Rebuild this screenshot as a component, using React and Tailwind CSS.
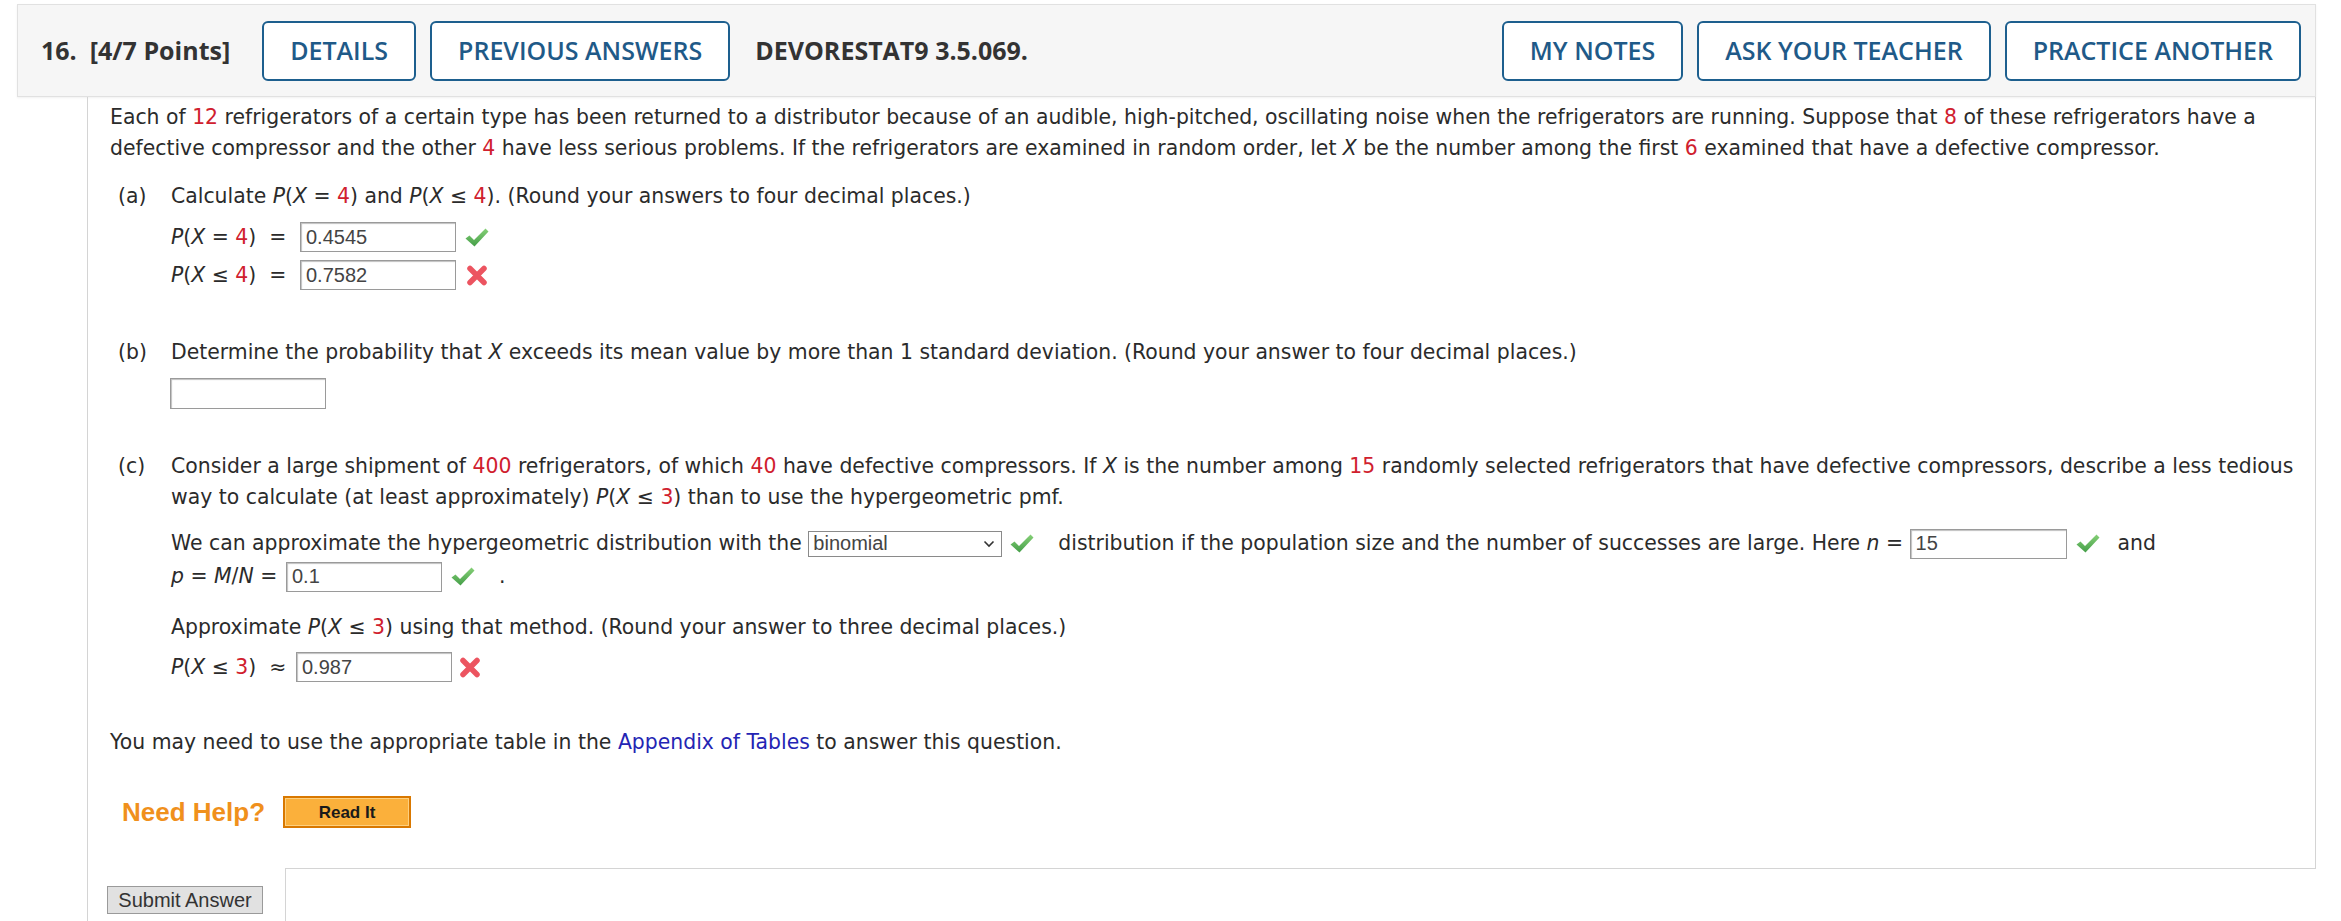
import React from "react";

const Red = ({ children }) => <span className="text-[#d0202e]">{children}</span>;
const M = ({ children }) => <i>{children}</i>;

function Check() {
  return (
    <svg width="24" height="19" viewBox="0 0 24 19" className="shrink-0">
      <defs>
        <linearGradient id="gck" x1="0" y1="0" x2="0" y2="1">
          <stop offset="0" stopColor="#86d077" />
          <stop offset="1" stopColor="#449e48" />
        </linearGradient>
      </defs>
      <path d="M0.5 10.5 L4.5 7.5 L9 12 L20.5 0.5 L23.5 3.5 L9.5 18.5 Z" fill="url(#gck)" />
    </svg>
  );
}

function Cross() {
  return (
    <svg width="22" height="21" viewBox="0 0 22 21" className="shrink-0">
      <path d="M4 3.5 L18 17.5 M18 3.5 L4 17.5" stroke="#ec5460" strokeWidth="5.5" strokeLinecap="round" />
    </svg>
  );
}

function Answer({ value, className = "" }) {
  return (
    <div
      className={`flex h-[30px] w-[156px] items-center border border-[#9a9a9a] bg-white pl-[5px] font-['Liberation_Sans',Arial,sans-serif] text-[20px] text-[#444] shadow-[inset_1px_1px_1px_rgba(0,0,0,0.25)] ${className}`}
    >
      {value}
    </div>
  );
}

function HeadButton({ children }) {
  return (
    <button className="h-[60px] rounded-[6px] border-2 border-[#1d5f8e] bg-white px-[26px] text-[25px] font-semibold text-[#1f5a88]">
      {children}
    </button>
  );
}

export default function App() {
  return (
    <div className="min-h-[921px] bg-white pl-[17px] pr-[25px] pt-[4px] text-[#2b2b2b]">
      <header className="flex h-[93px] items-center border border-[#e1e1e1] bg-[#f6f6f6] pl-[23px] pr-[14px] font-['Open_Sans',sans-serif] shadow-[0_1px_2px_rgba(0,0,0,0.06)]">
        <span className="text-[25px] font-bold text-[#333]">16.&nbsp; [4/7 Points]</span>
        <div className="ml-[32px] flex gap-[14px]">
          <HeadButton>DETAILS</HeadButton>
          <HeadButton>PREVIOUS ANSWERS</HeadButton>
        </div>
        <span className="ml-[25px] text-[25px] font-bold text-[#333]">DEVORESTAT9 3.5.069.</span>
        <div className="ml-auto flex gap-[14px]">
          <HeadButton>MY NOTES</HeadButton>
          <HeadButton>ASK YOUR TEACHER</HeadButton>
          <HeadButton>PRACTICE ANOTHER</HeadButton>
        </div>
      </header>

      <div className="ml-[70px] font-['DejaVu_Sans',Verdana,sans-serif] text-[20.4px] leading-[31px]">
        <div className="border-l border-r border-[#d4d4d4] pb-[40px] pl-[22px] pr-[8px] pt-[5px]">
          <p>
            Each of <Red>12</Red> refrigerators of a certain type has been returned to a distributor because of an
            audible, high-pitched, oscillating noise when the refrigerators are running. Suppose that <Red>8</Red> of
            these refrigerators have a defective compressor and the other <Red>4</Red> have less serious problems. If
            the refrigerators are examined in random order, let <M>X</M> be the number among the first <Red>6</Red>{" "}
            examined that have a defective compressor.
          </p>

          {/* (a) */}
          <div className="mt-[17px] flex">
            <span className="w-[61px] shrink-0 pl-[8px]">(a)</span>
            <div className="flex-1">
              <p>
                Calculate <M>P</M>(<M>X</M> = <Red>4</Red>) and <M>P</M>(<M>X</M> ≤ <Red>4</Red>). (Round your answers to
                four decimal places.)
              </p>
              <div className="mt-[6px] flex h-[38px] items-center">
                <span className="w-[129px] shrink-0">
                  <M>P</M>(<M>X</M> = <Red>4</Red>)&nbsp; =
                </span>
                <Answer value="0.4545" />
                <span className="ml-[9px]">
                  <Check />
                </span>
              </div>
              <div className="flex h-[38px] items-center">
                <span className="w-[129px] shrink-0">
                  <M>P</M>(<M>X</M> ≤ <Red>4</Red>)&nbsp; =
                </span>
                <Answer value="0.7582" />
                <span className="ml-[10px]">
                  <Cross />
                </span>
              </div>
            </div>
          </div>

          {/* (b) */}
          <div className="mt-[43px] flex">
            <span className="w-[61px] shrink-0 pl-[8px]">(b)</span>
            <div className="flex-1">
              <p>
                Determine the probability that <M>X</M> exceeds its mean value by more than 1 standard deviation. (Round
                your answer to four decimal places.)
              </p>
              <Answer value="" className="-ml-px mt-[10px] h-[31px]" />
            </div>
          </div>

          {/* (c) */}
          <div className="mt-[42px] flex">
            <span className="w-[61px] shrink-0 pl-[8px]">(c)</span>
            <div className="flex-1">
              <p>
                Consider a large shipment of <Red>400</Red> refrigerators, of which <Red>40</Red> have defective
                compressors. If <M>X</M> is the number among <Red>15</Red> randomly selected refrigerators that have
                defective compressors, describe a less tedious way to calculate (at least approximately){" "}
                <M>P</M>(<M>X</M> ≤ <Red>3</Red>) than to use the hypergeometric pmf.
              </p>

              <div className="mt-[14px] flex h-[33px] items-center whitespace-nowrap">
                <span>We can approximate the hypergeometric distribution with the&nbsp;</span>
                <div className="flex h-[26px] w-[194px] items-center justify-between border border-[#8a8a8a] bg-white pl-[4px] pr-[6px] font-['Liberation_Sans',Arial,sans-serif] text-[20px] text-[#444]">
                  <span>binomial</span>
                  <svg width="12" height="8" viewBox="0 0 12 8">
                    <path d="M1.5 1.5 L6 6 L10.5 1.5" fill="none" stroke="#333" strokeWidth="1.6" />
                  </svg>
                </div>
                <span className="ml-[8px]">
                  <Check />
                </span>
                <span className="ml-[24px]">
                  distribution if the population size and the number of successes are large. Here <M>n</M> =&nbsp;
                </span>
                <Answer value="15" className="w-[157px]" />
                <span className="ml-[9px]">
                  <Check />
                </span>
                <span className="ml-[18px]">and</span>
              </div>
              <div className="flex h-[33px] items-center">
                <span className="w-[115px] shrink-0">
                  <M>p</M> = <M>M</M>/<M>N</M> =
                </span>
                <Answer value="0.1" />
                <span className="ml-[9px]">
                  <Check />
                </span>
                <span className="ml-[24px]">.</span>
              </div>

              <p className="mt-[19px]">
                Approximate <M>P</M>(<M>X</M> ≤ <Red>3</Red>) using that method. (Round your answer to three decimal
                places.)
              </p>
              <div className="mt-[5px] flex h-[38px] items-center">
                <span className="w-[125px] shrink-0">
                  <M>P</M>(<M>X</M> ≤ <Red>3</Red>)&nbsp; ≈
                </span>
                <Answer value="0.987" />
                <span className="ml-[7px]">
                  <Cross />
                </span>
              </div>
            </div>
          </div>

          <p className="mt-[41px]">
            You may need to use the appropriate table in the{" "}
            <a className="text-[#2424b4]">Appendix of Tables</a> to answer this question.
          </p>

          <div className="ml-[12px] mt-[38px] flex h-[32px] items-center">
            <span className="font-['Liberation_Sans',Arial,sans-serif] text-[26px] font-bold text-[#f0901c]">
              Need Help?
            </span>
            <button className="ml-[18px] flex h-[32px] w-[128px] items-center justify-center border-2 border-[#d97800] bg-[#fbb03b] shadow-[inset_0_0_0_1px_#fdd080] font-['Liberation_Sans',Arial,sans-serif] text-[17px] font-bold text-[#1a1a1a]">
              Read It
            </button>
          </div>
        </div>

        <div className="flex h-[58px]">
          <div className="w-[198px] shrink-0 border-l border-[#d4d4d4] pl-[19px] pt-[18px]">
            <button className="flex h-[28px] w-[156px] items-center justify-center border border-[#9a9a9a] bg-[#e1e1e1] font-['Liberation_Sans',Arial,sans-serif] text-[20px] text-[#333]">
              Submit Answer
            </button>
          </div>
          <div className="flex-1 border-l border-t border-[#d4d4d4]" />
        </div>
      </div>
    </div>
  );
}
